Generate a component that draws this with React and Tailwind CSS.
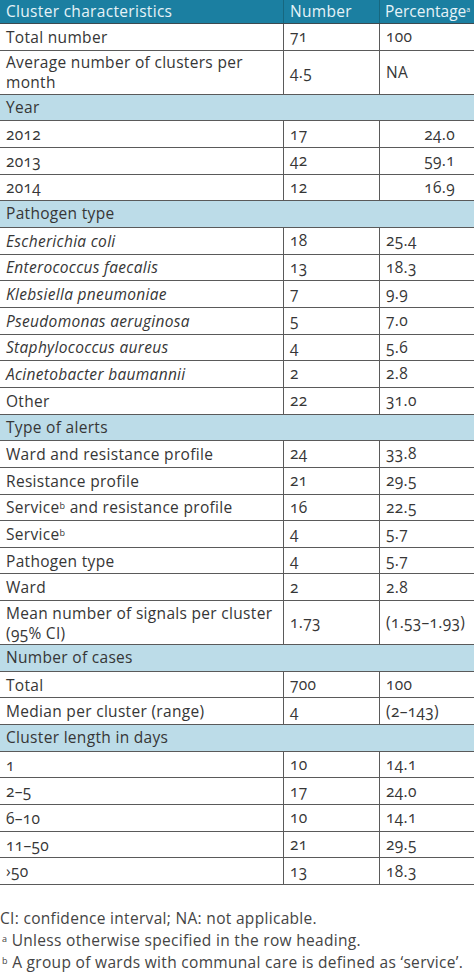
import React from 'react';

const rows = [
  { type: 'row', label: 'Total number', n: '71', p: '100' },
  { type: 'row', label: 'Average number of clusters per month', n: '4.5', p: 'NA', tall: true },
  { type: 'section', label: 'Year' },
  { type: 'row', label: '2012', n: '17', p: '24.0', right: true },
  { type: 'row', label: '2013', n: '42', p: '59.1', right: true },
  { type: 'row', label: '2014', n: '12', p: '16.9', right: true },
  { type: 'section', label: 'Pathogen type' },
  { type: 'row', label: 'Escherichia coli', n: '18', p: '25.4', italic: true },
  { type: 'row', label: 'Enterococcus faecalis', n: '13', p: '18.3', italic: true },
  { type: 'row', label: 'Klebsiella pneumoniae', n: '7', p: '9.9', italic: true },
  { type: 'row', label: 'Pseudomonas aeruginosa', n: '5', p: '7.0', italic: true },
  { type: 'row', label: 'Staphylococcus aureus', n: '4', p: '5.6', italic: true },
  { type: 'row', label: 'Acinetobacter baumannii', n: '2', p: '2.8', italic: true },
  { type: 'row', label: 'Other', n: '22', p: '31.0' },
  { type: 'section', label: 'Type of alerts' },
  { type: 'row', label: 'Ward and resistance profile', n: '24', p: '33.8' },
  { type: 'row', label: 'Resistance profile', n: '21', p: '29.5' },
  { type: 'row', label: 'Service', sup: 'b', rest: ' and resistance profile', n: '16', p: '22.5' },
  { type: 'row', label: 'Service', sup: 'b', n: '4', p: '5.7' },
  { type: 'row', label: 'Pathogen type', n: '4', p: '5.7' },
  { type: 'row', label: 'Ward', n: '2', p: '2.8' },
  { type: 'row', label: 'Mean number of signals per cluster (95% CI)', n: '1.73', p: '(1.53–1.93)', tall: true },
  { type: 'section', label: 'Number of cases' },
  { type: 'row', label: 'Total', n: '700', p: '100' },
  { type: 'row', label: 'Median per cluster (range)', n: '4', p: '(2–143)' },
  { type: 'section', label: 'Cluster length in days' },
  { type: 'row', label: '1', n: '10', p: '14.1' },
  { type: 'row', label: '2–5', n: '17', p: '24.0' },
  { type: 'row', label: '6–10', n: '10', p: '14.1' },
  { type: 'row', label: '11–50', n: '21', p: '29.5' },
  { type: 'row', label: '›50', n: '13', p: '18.3' },
];

function Sup({ children }) {
  return <span className="relative -top-[4px] text-[9px] leading-none">{children}</span>;
}

export default function App() {
  return (
    <div className="w-[474px] min-h-screen bg-white text-[#363636] font-['Open_Sans',sans-serif] oldstyle-nums text-[15.5px] tracking-[0.02em]">
      {/* Header */}
      <div className="flex h-[24px] bg-[#1b7fa1] text-[#e6f3f8] text-[15.5px] leading-[23px] tracking-normal border-b border-[#3d4a50]">
        <div className="w-[284px] pl-[6px] border-r border-[#17677f] tracking-[0.02em]">Cluster characteristics</div>
        <div className="w-[96px] pl-[6px] border-r border-[#17677f] tracking-[0.02em]">Number</div>
        <div className="flex-1 pl-[5px] whitespace-nowrap overflow-hidden">
          Percentage<span className="relative -top-[5px] text-[7px] leading-none">a</span>
        </div>
      </div>

      {rows.map((r, i) => {
        if (r.type === 'section') {
          return (
            <div key={i} className="h-[26.67px] bg-[#bcdce8] border-b border-[#5a5a5a] pl-[6px] flex items-center">
              {r.label}
            </div>
          );
        }
        return (
          <div
            key={i}
            className={`flex border-b border-[#5a5a5a] ${r.tall ? 'h-[44px]' : 'h-[26.67px]'}`}
          >
            <div className={`w-[284px] pl-[6px] pr-2 border-r border-[#5a5a5a] flex items-center leading-[20px] ${r.italic ? 'italic' : ''}`}>
              <span>
                {r.label}
                {r.sup && <Sup>{r.sup}</Sup>}
                {r.rest}
              </span>
            </div>
            <div className="w-[96px] pl-[6px] border-r border-[#5a5a5a] flex items-center">{r.n}</div>
            <div className={`flex-1 flex items-center whitespace-nowrap ${r.right ? 'justify-end pr-[19px]' : 'pl-[6px]'}`}>
              {r.p}
            </div>
          </div>
        );
      })}

      {/* Footnotes */}
      <div className="pt-[22px] text-[15.5px] leading-[22px] text-[#444]">
        <div>CI: confidence interval; NA: not applicable.</div>
        <div className="pl-[2px]">
          <Sup>a</Sup> Unless otherwise specified in the row heading.
        </div>
        <div className="pl-[2px]">
          <Sup>b</Sup> A group of wards with communal care is defined as ‘service’.
        </div>
      </div>
    </div>
  );
}
